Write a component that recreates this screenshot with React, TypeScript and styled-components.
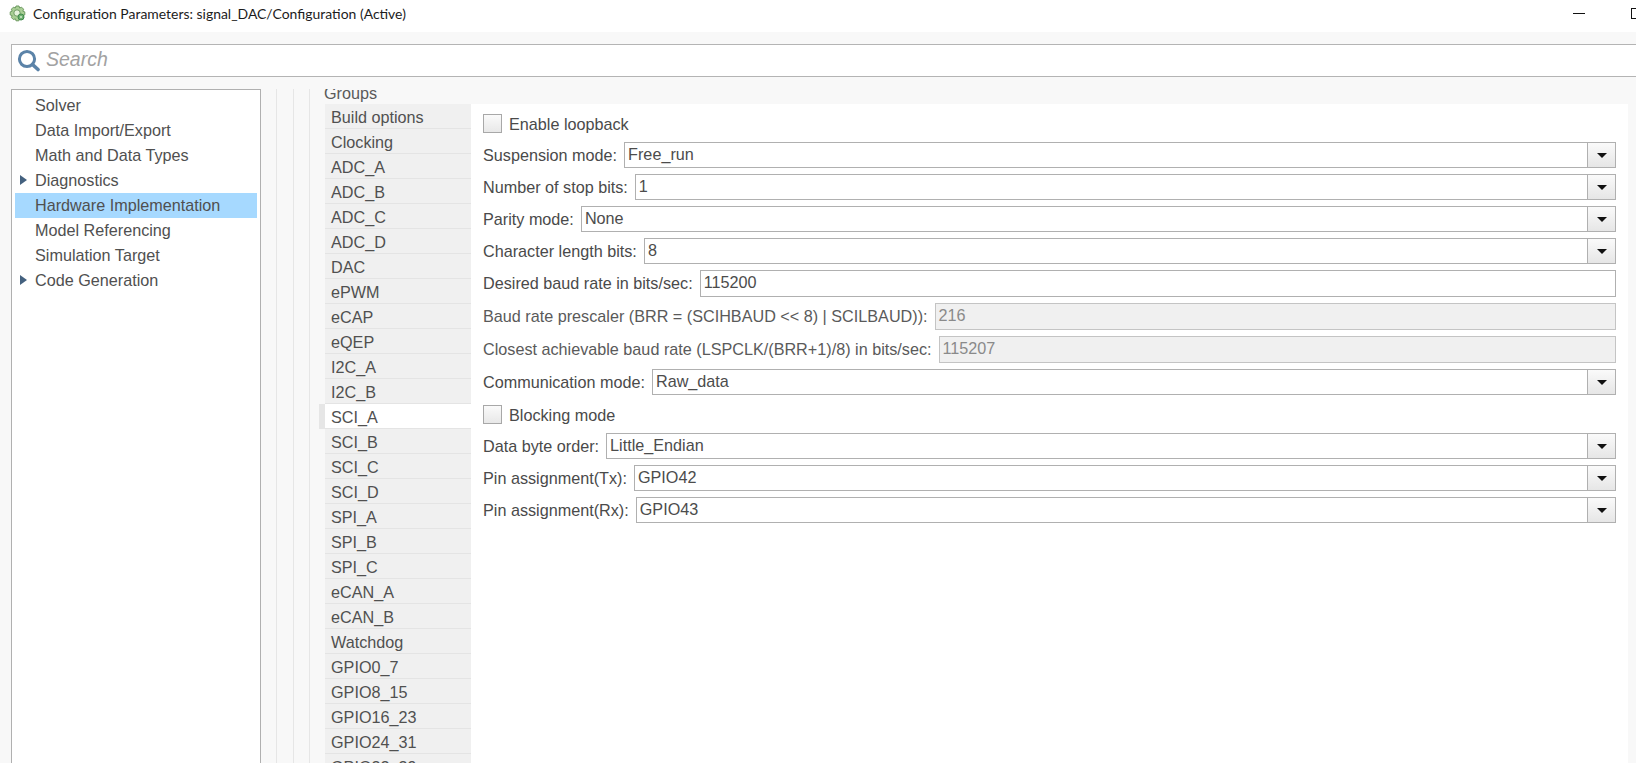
import React from "react";
import styled, { createGlobalStyle } from "styled-components";

const Global = createGlobalStyle`
  html, body { margin: 0; padding: 0; height: 100%; overflow: hidden; background: #f8f8f8; }
  #root { height: 100%; }
  * { box-sizing: border-box; }
`;

const Page = styled.div`
  width: 1636px; height: 763px; display: flex; flex-direction: column; overflow: hidden;
  font-family: "Liberation Sans", Arial, sans-serif; font-size: 16.2px; color: #4a4a4a;
`;
const TitleBar = styled.div`
  height: 32px; flex: none; background: #fff; display: flex; align-items: center; padding: 0 0 5px 9px;
`;
const TitleText = styled.span`
  margin-left: 6px; font-family: Lato, sans-serif; font-size: 13.95px; color: #1c1c1c;
`;
const WinControls = styled.div`
  margin-left: auto; display: flex; align-items: center; gap: 46px; margin-right: -6px;
`;
const MinBtn = styled.div` width: 12px; height: 1px; background: #111; `;
const MaxBtn = styled.div` width: 11px; height: 11px; border: 1px solid #111; `;
const SearchWrap = styled.div` flex: none; padding: 12px 0 12px 11px; `;
const SearchBox = styled.div`
  height: 33px; background: #fff; border: 1px solid #b4b4b4; border-right: none;
  display: flex; align-items: center; padding-left: 5px; gap: 6px;
`;
const SearchHint = styled.span` font-style: italic; font-size: 19.5px; color: #a2a2a2; margin-top: -2px; `;
const Body = styled.div` flex: 1; display: flex; min-height: 0; padding-left: 11px; `;
const Tree = styled.div`
  width: 250px; flex: none; margin-bottom: -2px; background: #fff; border: 1px solid #b0b0b0; padding: 3px;
`;
const TreeRow = styled.div<{ $sel?: boolean }>`
  height: 25px; display: flex; align-items: center; padding-left: 20px; position: relative;
  background: ${p => p.$sel ? "#a6d9ff" : "transparent"}; color: #505050;
`;
const Arrow = styled.span`
  position: absolute; left: 5px; top: 7px; width: 0; height: 0;
  border-left: 7px solid #44617f; border-top: 5px solid transparent; border-bottom: 5px solid transparent;
`;
const Rule = styled.div<{ $gap: number }>` width: 1px; flex: none; background: #e6e6e6; margin-left: ${p => p.$gap}px; `;
const Content = styled.div` flex: 1; display: flex; flex-direction: column; min-width: 0; margin-left: 15px; `;
const GroupsLabel = styled.div` height: 15px; line-height: 9px; overflow: hidden; margin-left: -1px; color: #5a5a5a; `;
const Panels = styled.div` flex: 1; display: flex; min-height: 0; margin-right: 8px; `;
const Tabs = styled.div` width: 152px; flex: none; overflow: hidden; height: 659px; margin-left: -6px; padding-left: 6px; `;
const Tab = styled.div<{ $sel?: boolean }>`
  height: 25px; display: flex; align-items: center; padding: 2px 0 0 6px; white-space: nowrap;
  background: ${p => p.$sel ? "#fff" : "#f0f0f0"}; border-bottom: 1px solid #e4e4e4; color: #505050;
  ${p => p.$sel ? "box-shadow: -6px 0 0 #e6e6e6;" : ""}
`;
const Form = styled.div` flex: 1; background: #fff; padding: 10px 12px 0 12px; display: flex; flex-direction: column; `;
const CheckRow = styled.div<{ $mb: number }>` display: flex; align-items: center; height: 19px; gap: 7px; margin-bottom: ${p => p.$mb}px; `;
const Check = styled.span`
  width: 19px; height: 19px; border: 1px solid #a8a8a8; background: linear-gradient(#fafafa, #e8e8e8);
`;
const CheckLabel = styled.span` margin-top: 1px; `;
const FieldRow = styled.div<{ $mb?: number; $h?: number }>`
  display: flex; align-items: center; height: ${p => p.$h ?? 26}px; margin-bottom: ${p => p.$mb ?? 6}px; white-space: nowrap; gap: 7px;
`;
const Select = styled.div`
  flex: 1; height: 100%; border: 1px solid #b0b0b0; display: flex; align-items: center; padding-left: 3px; background: #fff; color: #4c4c4c;
`;
const ValueText = styled.span` margin-top: -2px; `;
const DropBtn = styled.span`
  margin-left: auto; width: 28px; height: 100%; flex: none; border-left: 1px solid #b0b0b0;
  background: linear-gradient(#fafafa, #e6e6e6); display: flex; align-items: center; justify-content: center;
`;
const Caret = styled.span`
  width: 0; height: 0; border-top: 5px solid #111; border-left: 5px solid transparent; border-right: 5px solid transparent;
`;
const Input = styled.div<{ $off?: boolean }>`
  flex: 1; height: 100%; border: 1px solid ${p => p.$off ? "#c4c4c4" : "#b0b0b0"}; display: flex; align-items: center; padding-left: 3px;
  background: ${p => p.$off ? "#f0f0f0" : "#fff"}; color: ${p => p.$off ? "#8a8a8a" : "#4c4c4c"};
`;
const DimLabel = styled.span` color: #5a5a5a; `;

const Cog = () => (
  <svg width="18" height="18" viewBox="0 0 18 18">
    <path d="M7 1h3l.6 2 2-.8 2 2-.8 2 2 .7v3l-2 .7.8 2-2 2-2-.8-.7 2H7l-.6-2-2 .8-2-2 .8-2-2-.7v-3l2-.7-.8-2 2-2 2 .8z" fill="#a9cf95" stroke="#6e9a62" />
    <circle cx="8" cy="8" r="3.2" fill="#e6f2dd" stroke="#6e9a62" />
    <circle cx="12" cy="12" r="3" fill="#6fb070" stroke="#3f8a4c" />
    <circle cx="12" cy="12" r="1" fill="#d5ecd0" />
  </svg>
);
const Lens = () => (
  <svg width="23" height="23" viewBox="0 0 23 23" fill="none">
    <circle cx="10" cy="10" r="7.6" stroke="#5b83a8" strokeWidth="3" />
    <path d="M15.5 15.5L21 20.5" stroke="#5b83a8" strokeWidth="3.6" strokeLinecap="round" />
  </svg>
);

const tree = ["Solver","Data Import/Export","Math and Data Types","Diagnostics","Hardware Implementation","Model Referencing","Simulation Target","Code Generation"];
const tabs = ["Build options","Clocking","ADC_A","ADC_B","ADC_C","ADC_D","DAC","ePWM","eCAP","eQEP","I2C_A","I2C_B","SCI_A","SCI_B","SCI_C","SCI_D","SPI_A","SPI_B","SPI_C","eCAN_A","eCAN_B","Watchdog","GPIO0_7","GPIO8_15","GPIO16_23","GPIO24_31","GPIO32_39"];

const Sel = ({ label, value, mb }: { label: string; value: string; mb?: number }) => (
  <FieldRow $mb={mb}>
    <span>{label}</span>
    <Select><ValueText>{value}</ValueText><DropBtn><Caret /></DropBtn></Select>
  </FieldRow>
);

export default function App() {
  return (
    <Page>
      <Global />
      <TitleBar>
        <Cog />
        <TitleText>Configuration Parameters: signal_DAC/Configuration (Active)</TitleText>
        <WinControls><MinBtn /><MaxBtn /></WinControls>
      </TitleBar>
      <SearchWrap>
        <SearchBox><Lens /><SearchHint>Search</SearchHint></SearchBox>
      </SearchWrap>
      <Body>
        <Tree>
          {tree.map(t => (
            <TreeRow key={t} $sel={t === "Hardware Implementation"}>
              {(t === "Diagnostics" || t === "Code Generation") && <Arrow />}
              {t}
            </TreeRow>
          ))}
        </Tree>
        <Rule $gap={15} />
        <Rule $gap={16} />
        <Rule $gap={15} />
        <Content>
          <GroupsLabel>Groups</GroupsLabel>
          <Panels>
            <Tabs>{tabs.map(t => <Tab key={t} $sel={t === "SCI_A"}>{t}</Tab>)}</Tabs>
            <Form>
              <CheckRow $mb={9}><Check /><CheckLabel>Enable loopback</CheckLabel></CheckRow>
              <Sel label="Suspension mode:" value="Free_run" />
              <Sel label="Number of stop bits:" value="1" />
              <Sel label="Parity mode:" value="None" />
              <Sel label="Character length bits:" value="8" />
              <FieldRow $h={27}><span>Desired baud rate in bits/sec:</span><Input><ValueText>115200</ValueText></Input></FieldRow>
              <FieldRow $h={27}><DimLabel>Baud rate prescaler (BRR = (SCIHBAUD &lt;&lt; 8) | SCILBAUD)):</DimLabel><Input $off><ValueText>216</ValueText></Input></FieldRow>
              <FieldRow $h={27}><DimLabel>Closest achievable baud rate (LSPCLK/(BRR+1)/8) in bits/sec:</DimLabel><Input $off><ValueText>115207</ValueText></Input></FieldRow>
              <Sel label="Communication mode:" value="Raw_data" mb={10} />
              <CheckRow $mb={9}><Check /><CheckLabel>Blocking mode</CheckLabel></CheckRow>
              <Sel label="Data byte order:" value="Little_Endian" />
              <Sel label="Pin assignment(Tx):" value="GPIO42" />
              <Sel label="Pin assignment(Rx):" value="GPIO43" />
            </Form>
          </Panels>
        </Content>
      </Body>
    </Page>
  );
}
